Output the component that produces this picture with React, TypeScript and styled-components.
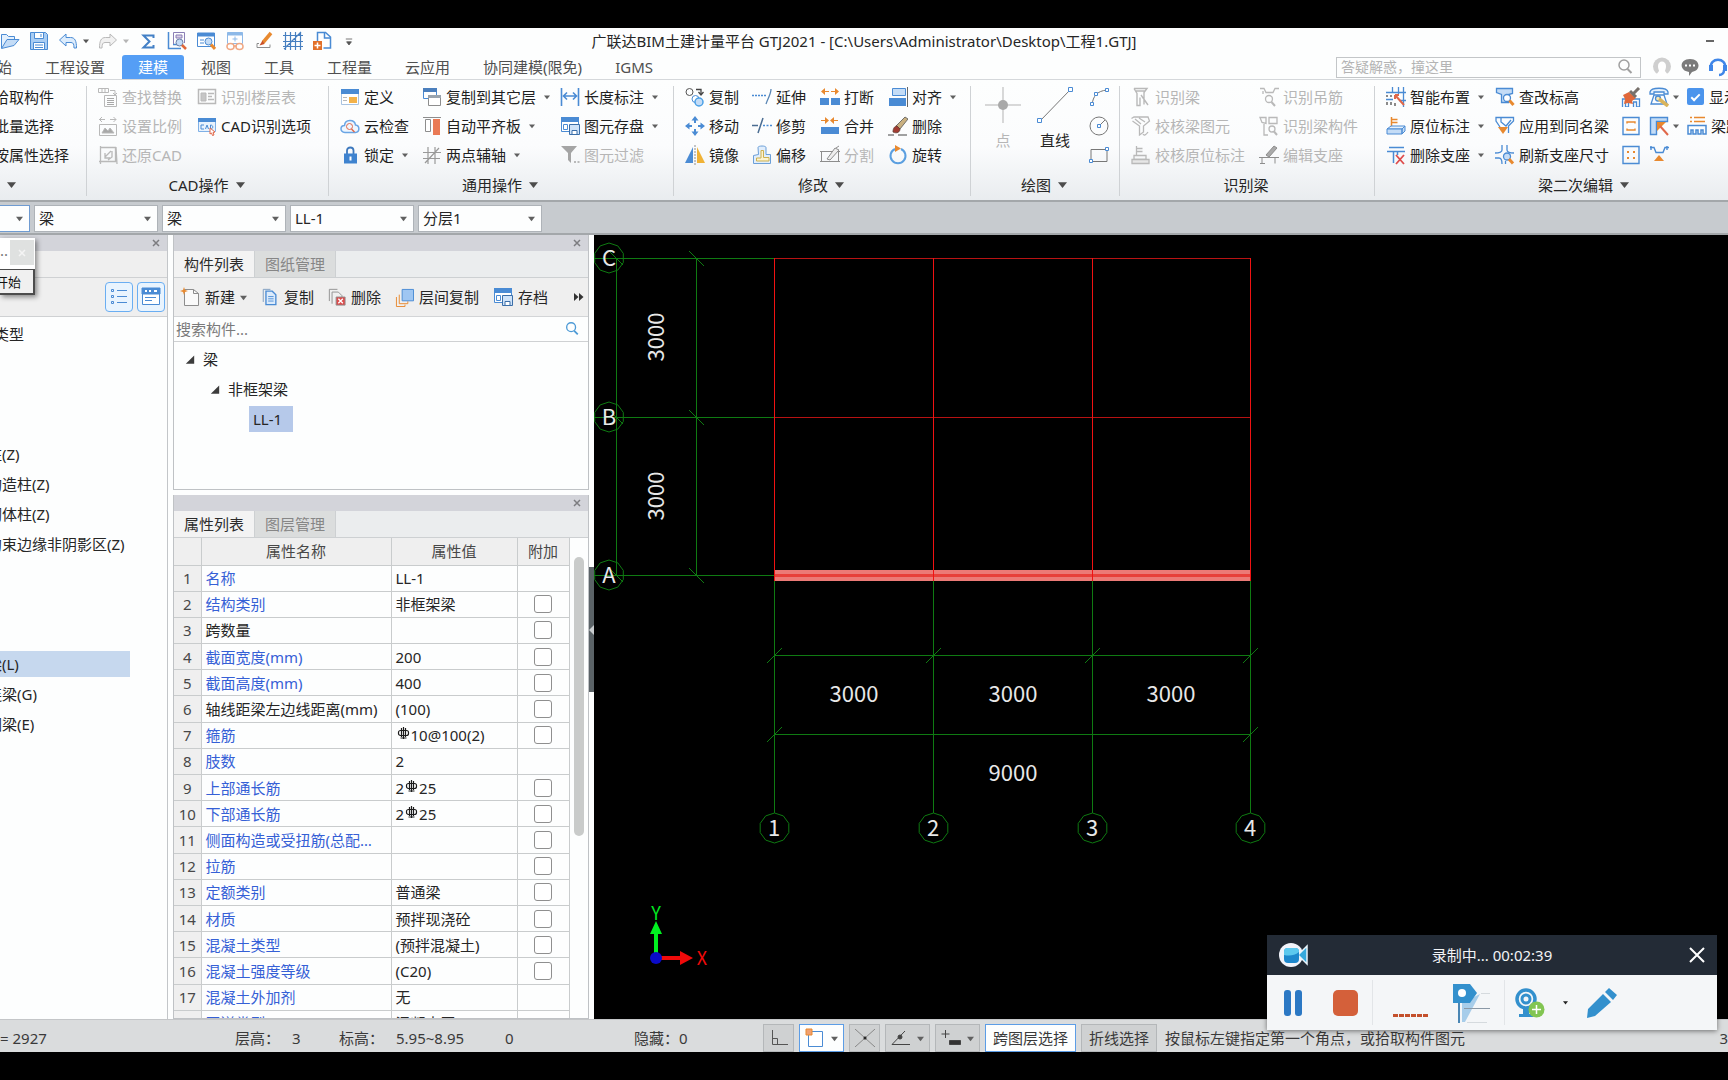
import React, { ReactNode } from "react";
import styled, { createGlobalStyle, css } from "styled-components";

const GlobalStyle = createGlobalStyle`
  *, *::before, *::after { box-sizing: border-box; }
  html, body, #root { height: 100%; }
  body {
    margin: 0;
    background: #000;
    color: #262626;
    font: 15px/20px "Noto Sans", "Noto Sans CJK SC", sans-serif;
    overflow: hidden;
  }
  button, input, select { font: inherit; color: inherit; }
  button { border: 0; background: none; padding: 0; white-space: nowrap; }
  svg { display: block; flex: none; }
`;

/* ---------- palette ---------- */
const BLUE = "#4a8bd4";
const PALE = "#c4dcf6";
const ORANGE = "#e8892f";
const RED = "#dd4b4b";
const GREY = "#8d8d8d";
const DIM = "#b9b9b9";

/* ---------- icons ---------- */
const icons: Record<string, ReactNode> = {
  open: (
    <g stroke={BLUE} fill="#e3f0fd">
      <path d="M1.500 17V3.500h5l2 2h6v3" />
      <path d="M1.500 17.500 7 8.500h12l-5 6z" fill={PALE} />
    </g>
  ),
  save: (
    <g stroke={BLUE}>
      <path d="M1.500 1.500h15l2 2v15h-17z" fill="#a9cdf3" />
      <path d="M5.500 1.500h9v6h-9zM4.500 11.500h11v7h-11z" fill="#fff" />
      <path d="M6 14h8M6 16.500h8M12 3v3" />
    </g>
  ),
  undo: <path d="M8 3 1.500 9 8 15v-3.500h5c2.500 0 3 2 3 5.500h2.500c0-7-1.500-10.500-6-10.500H8z" fill="#dcecfc" stroke={BLUE} />,
  redo: <path d="M12 3l6.500 6-6.500 6v-3.500H7c-2.500 0-3 2-3 5.500H1.500c0-7 1.500-10.500 6-10.500H12z" fill="#f1f1f1" stroke={DIM} />,
  sigma: <path d="M15.500 7V4.500H5.500l6 6-6 6h10V14" fill="none" stroke="#4380c6" strokeWidth="2" />,
  report: (
    <g fill="none" stroke={BLUE}>
      <path d="M1.500 1v16.500H14M6 13.500h6" strokeWidth="1.500" />
      <path d="M6.500 13V1.500h11V12" stroke="#8a7fb5" />
      <path d="M9 4h6v3H9z" fill="#d9cfe6" stroke="#8a7fb5" />
      <circle cx="12.500" cy="11.500" r="3.500" fill={PALE} stroke="#6b7fa8" />
      <path d="m15 14 4 4" stroke="#e0683a" strokeWidth="2.500" />
    </g>
  ),
  find: (
    <g fill="none" stroke={BLUE}>
      <path d="M1.500 2.500h17v13h-17z" fill="#fff" />
      <path d="M1.500 2h17v3h-17z" fill={BLUE} />
      <path d="M4 9h4M4 12h4" />
      <circle cx="12.500" cy="10.500" r="3.500" fill={PALE} />
      <path d="m15 13.500 4 4.500" stroke={ORANGE} strokeWidth="3" />
    </g>
  ),
  glasses: (
    <g fill="none" stroke="#8db9e8">
      <path d="M2.500 1.500h15v11h-15z" fill="#fff" />
      <path d="M2.500 2h15v2h-15z" fill="#8db9e8" />
      <path d="M10 5.500v5M7.500 8h5" />
      <g stroke="#f0a884" strokeWidth="1.600">
        <ellipse cx="5.500" cy="15.500" rx="3.500" ry="3" fill="#fff" />
        <ellipse cx="14.500" cy="15.500" rx="3.500" ry="3" fill="#fff" />
        <path d="M8.500 15h3" />
      </g>
    </g>
  ),
  brush: (
    <g fill="none">
      <path d="M17 2 9 11.500" stroke={ORANGE} strokeWidth="3.500" />
      <path d="m8.500 9.500-3 5 5-1.500z" fill="#c94f27" />
      <path d="M5 12.500H3v4h13v-3" stroke={GREY} />
    </g>
  ),
  net: <path d="M2.500 1v18M7.500 1v18M12.500 1v18M17.500 1v18M0 4.500h20M0 10.500h20M0 15.500h20M1 18 18 1" fill="none" stroke="#467fc0" strokeWidth="1.200" />,
  addDoc: (
    <g>
      <path d="M5.500 10V1.500h8l5 4.500v11h-7" fill="#fff" stroke={BLUE} strokeWidth="1.500" />
      <path d="M12.500 2v5h5.500" fill="none" stroke={BLUE} strokeWidth="1.500" />
      <path d="M1 10h9v9H1z" fill="#e2702a" />
      <path d="M5.500 11.500v6M2.500 14.500h6" stroke="#fff" strokeWidth="1.500" />
    </g>
  ),
  more: (
    <g stroke="#555" fill="#555">
      <path d="M6 7.500h8" />
      <path d="M7 11h6l-3 4z" />
    </g>
  ),
  replace: (
    <g fill="none" stroke={DIM}>
      <path d="M.5 1.500h10v4H.5zM4 1.500v4M7 1.500v4M12 3.500h5v4M15 6l2 2 2-2" />
      <path d="M6.500 8.500h12v11h-12z" />
      <path d="M9 11.500h7M9 13.500h7M9 15.500h7M9 17.500h7" stroke="#a8a8a8" />
    </g>
  ),
  scale: (
    <g fill="none" stroke={DIM}>
      <path d="M1 3.500h6M4 1 1.500 3.500 4 6M12 3.500h6M15.500 1 18 3.500 15.500 6" />
      <path d="M1.500 8.500h17v11h-17z" />
      <path d="m4 17 3-5 3 3 2-3 4 5z" fill="#a8a8a8" />
    </g>
  ),
  restore: <path d="M2.500 1v18M2.500 2.500h15v14H1M14 6v6l-4 3M13 6 7 12m0-4v5h5M18 2l1 17" fill="none" stroke={DIM} strokeWidth="1.300" />,
  floors: (
    <g fill="none" stroke={DIM}>
      <path d="M1.500 2.500h17v14h-17z" strokeWidth="1.500" />
      <path d="M4 6h5v8H4z" fill="#c6c6c6" />
      <path d="M11 6.500h6M11 9.500h4M11 12.500h6" strokeWidth="1.500" />
    </g>
  ),
  cad: (
    <g>
      <path d="M1.500 2.500h17v13h-17z" fill="#e8f2fd" stroke="#7fb0e6" />
      <path d="M1 2h18v4H1z" fill={BLUE} />
      <path d="M7 9H4v4h3M8.500 13l1.500-4 1.500 4M13.500 9v4c3 0 3-4 0-4" fill="none" stroke={BLUE} />
      <path d="m13 12 5 4-2 .5 1 2.500-1.500.5-1-2.500-1.500 1z" fill="#fff" stroke="#e0684a" />
    </g>
  ),
  define: (
    <g>
      <path d="M1.500 2.500h17v15h-17z" fill="#fff" stroke="#a9c3e0" />
      <path d="M1 2h18v5H1z" fill={BLUE} />
      <path d="M9 10h8v6H9z" fill="#f3b24a" />
      <path d="M3 10.500h4M3 13.500h4" stroke={DIM} />
    </g>
  ),
  cloud: (
    <g fill="none" stroke="#6aa5e4">
      <path d="M5 16.500C-.5 16 0 9.500 4.500 9.500 5 3 14.500 3 15.500 9c4.500.5 4.500 7 0 7.500z" fill="#eef6ff" strokeWidth="1.500" />
      <circle cx="9.500" cy="10.500" r="3" stroke="#e0684a" />
      <path d="m11.500 13 3 3" stroke="#e0684a" strokeWidth="1.500" />
    </g>
  ),
  lock: (
    <g>
      <path d="M7 9V5.500c0-4 6.500-4 6.500 0V9" fill="none" stroke="#3d78bd" strokeWidth="1.800" />
      <path d="M4 8.500h13v10H4z" fill="#3f83cf" />
      <path d="M10.500 11.500v4" stroke="#fff" strokeWidth="2" />
    </g>
  ),
  copyFloor: (
    <g>
      <path d="M1.500 1.500h13v10h-13z" fill="#fff" stroke={BLUE} />
      <path d="M1 1h14v4H1z" fill="#4b7fbd" />
      <path d="M6.500 8.500h12v10h-12z" fill="#fff" stroke={GREY} />
      <path d="M6 8h13v3H6z" fill="#9aa4ae" />
    </g>
  ),
  align2: (
    <g>
      <path d="M1 1.500h18" stroke={GREY} />
      <path d="M3.500 3.500h5v12h-5z" fill="#fff" stroke={GREY} />
      <path d="M11 3h7v16h-7z" fill="#ea7a55" />
    </g>
  ),
  axis: <path d="M6 2v17M13 2v17M1 7.500h18M1 13.500h17M3 18 17 3" fill="none" stroke="#999" strokeWidth="1.200" />,
  measure: <path d="M1.500 1v18M18.500 1v18M3 9h14M7 5.500 3.500 9 7 12.500M13 5.500 16.500 9 13 12.500" fill="none" stroke={BLUE} strokeWidth="1.600" />,
  storage: (
    <g>
      <path d="M1.500 1.500h17v14h-17z" fill="#fff" stroke={BLUE} />
      <path d="M1 1h18v5H1z" fill={BLUE} />
      <path d="M3.500 8.500h4v5h-4z" fill="none" stroke={BLUE} />
      <path d="M9.500 8.500h10v10h-10z" fill="#cfe3f9" stroke="#3b6ea8" />
      <path d="M12 14.500h5v4h-5z" fill="#fff" stroke="#3b6ea8" />
    </g>
  ),
  filter: (
    <g>
      <path d="M1 1h16l-6 7v10l-3-3V8z" fill="#a5a5a5" />
      <path d="M14 17h2M17.500 17h2" stroke="#a5a5a5" strokeWidth="1.500" />
    </g>
  ),
  copy3: (
    <g fill="none">
      <circle cx="4.500" cy="5" r="3.500" stroke="#555" />
      <path d="M11 2.500h5v4M13.500 5l2.500 3 2.500-3" stroke="#444" strokeWidth="1.300" />
      <circle cx="10.500" cy="12" r="3.500" fill="#fff" stroke={BLUE} />
      <circle cx="14" cy="15" r="4" fill={PALE} stroke="#4aa0e6" strokeWidth="1.500" />
    </g>
  ),
  move: (
    <g fill={BLUE}>
      <path d="M10 0l3.500 4.500h-7zM10 20l3.500-4.500h-7zM0 10l4.500-3.500v7zM20 10l-4.500-3.500v7z" />
      <path d="M9 4h2v3H9zM9 13h2v3H9zM4 9h3v2H4zM13 9h3v2h-3z" />
    </g>
  ),
  mirror: (
    <g>
      <path d="M8 2v16H0z" fill={BLUE} />
      <path d="M10 0v20" stroke={GREY} strokeDasharray="2 1" />
      <path d="M12 2v16h8z" fill="#f0b236" />
    </g>
  ),
  extend: (
    <g fill="none" stroke={BLUE} strokeWidth="1.300">
      <path d="M0 8.500h14" strokeDasharray="2 1" />
      <path d="M19 2c0 5-3 9-5 15" stroke="#5a86b4" />
    </g>
  ),
  trim: (
    <g fill="none" stroke={BLUE} strokeWidth="1.500">
      <path d="M0 9.500h6M11 2 6 17" stroke="#4b6d92" />
      <path d="M11 9.500h9" strokeDasharray="2 1.500" />
    </g>
  ),
  offset: (
    <g>
      <path d="M6 2.500c0-2 8-2 8 0v7h4.500v9H1.500v-8l5-1z" fill="#e1eefc" stroke="#6b9fd8" />
      <path d="M9 5.500h2.500v7H17v3.500H4.500v-3H9z" fill="#fdf3cf" stroke="#cdb04f" />
    </g>
  ),
  breakIt: (
    <g>
      <path d="M0 11h9v7H0zM11 11h9v7h-9z" fill={BLUE} />
      <path d="M1 4.500l4-3.500v7zM5 4h4v1H5zM19 4.500l-4-3.500v7zM11 4h4v1h-4z" fill={ORANGE} />
    </g>
  ),
  merge: (
    <g>
      <path d="M1 11h18v7H1z" fill={BLUE} />
      <path d="M9 4.500 5 1v7zM1 4h4v1H1zM10 4.500l4-3.500v7zM14 4h4v1h-4z" fill={ORANGE} />
    </g>
  ),
  split: (
    <g fill="none" stroke={GREY}>
      <path d="M1.500 6.500h17v10h-17zM0 6.500h20M0 16.500h20" />
      <path d="m7 14 8-11 4 2-9 10z" fill="#eee" />
      <path d="m16 3 3-2" />
    </g>
  ),
  alignTop: (
    <g>
      <path d="M4.500 1.500h13v7h-13z" fill={PALE} stroke={BLUE} />
      <path d="M1 11h17v8H1z" fill={BLUE} />
      <path d="M19.500 0v20" stroke="#666" />
    </g>
  ),
  erase: (
    <g>
      <path d="m8 10 9-9 3 2-8 10z" fill="#c9b080" stroke="#555" strokeWidth=".8" />
      <path d="M5 16c0-4 2-6 4-6l3 3c0 3-3 5-7 3" fill="#a23c32" stroke="#5f3a30" strokeWidth=".8" />
      <path d="M0 19h6M10 19h9" stroke="#444" />
    </g>
  ),
  rotate: (
    <g fill="none">
      <path d="M13 4a7.500 7.500 0 1 1-6 0" stroke="#5b9fe0" strokeWidth="2" />
      <path d="m7 0 6 3.500L7 7z" fill={ORANGE} />
    </g>
  ),
  arc: (
    <g fill="none" stroke="#777">
      <path d="M3 18C4 9 8 4 18 3" />
      <g fill="#fff" stroke={BLUE}>
        <path d="M1.500 15.500h3v3h-3zM5.500 5.500h3v3h-3zM16.500 1.500h3v3h-3z" />
      </g>
    </g>
  ),
  circle: (
    <g fill="none" stroke="#777">
      <circle cx="10" cy="10" r="9" />
      <path d="M11 9l5-5" />
      <path d="M8.500 8.500h3v3h-3z" stroke={BLUE} />
    </g>
  ),
  rect: (
    <g fill="none" stroke="#777">
      <path d="M2 4.500h16v12H2z" />
      <g fill="#fff" stroke={BLUE}>
        <path d="M.5 14.500h3v3h-3zM16.500 2.500h3v3h-3z" />
      </g>
    </g>
  ),
  idBeam: <path d="M3 1.500h13l-3 4v12M3 1.500l3 5v12h3v-8M10 8l7 10M5 4h9" fill="none" stroke={DIM} strokeWidth="1.400" />,
  chkBeam: <path d="M.5 2.500 3 1h14l1.500 4-6 5v6l-4 3V10l-7-5M4 3l6 5M8 2l6 4M12 18c1 2 3 1 5-2" fill="none" stroke={DIM} strokeWidth="1.300" />,
  stampGrey: (
    <g fill="none" stroke={DIM} strokeWidth="1.300">
      <path d="M5.500 10V1M5.500 3.500h6M5.500 6.500h6M3 10.500h12v4H3z" />
      <path d="M1 14.500h17v4H1z" fill="#e6e6e6" />
    </g>
  ),
  hanger: (
    <g fill="none" stroke={DIM} strokeWidth="1.300">
      <path d="M1 1.500h4l2 4h7l2-4h4M4 4v3" />
      <circle cx="10" cy="12" r="3.500" />
      <path d="m12.500 15 3.500 4" strokeWidth="2" />
    </g>
  ),
  idPart: (
    <g fill="none" stroke={DIM} strokeWidth="1.300">
      <path d="M1 1.500h6v6l-4-1zM10 1.500h8v6h-8zM5 8v11h4" />
      <circle cx="13" cy="13" r="3" />
      <path d="m15 15.500 3 3.500" strokeWidth="2" />
    </g>
  ),
  editSeat: (
    <g fill="none" stroke={GREY}>
      <path d="m7 10 8-9 3 2-8 9z" fill="#aaa" />
      <path d="M0 12.500h20M3 12.500v6M16 12.500v6M1 18.500h5" />
    </g>
  ),
  smart: (
    <g fill="none" stroke={BLUE} strokeWidth="1.300">
      <path d="M6.500 0v6M12.500 0v7M17.500 0v20M0 5.500h20M0 12.500h7M13 13.500h7" />
      <path d="M1 8v2M5 8v2M1 15v3M5 15v3M9 16v3" stroke="#6e6e6e" strokeWidth="1.600" />
      <path d="m9 8 9 10M9 8v4M9 8h4" stroke="#e0684a" strokeWidth="2" />
    </g>
  ),
  stamp: (
    <g fill="none">
      <path d="M5.500 11V1M5.500 3.500h6M5.500 6.500h6" stroke={ORANGE} strokeWidth="1.500" />
      <path d="m1 13 4-3h14l-3 3z" fill="#e5f1fd" stroke={BLUE} />
      <path d="M1 13h15v5H1zM16 13l3-3v5l-3 3z" fill={PALE} stroke={BLUE} />
    </g>
  ),
  delSeat: (
    <g fill="none" stroke={BLUE} strokeWidth="1.500">
      <path d="M3 2.500h15M1 6.500h18M7.500 6.500V18M11.500 6.500V10" />
      <path d="m10 10 8 9M18 10l-8 9" stroke={RED} strokeWidth="1.800" />
    </g>
  ),
  elev: (
    <g fill="none" stroke={BLUE} strokeWidth="1.300">
      <path d="M1.500 1.500h16v5l-4 1v8h-7v-8l-5-2z" fill={PALE} />
      <circle cx="12" cy="11" r="3.500" fill="#fff" />
      <path d="m14.500 13.500 4 4.500" stroke={ORANGE} strokeWidth="3" />
    </g>
  ),
  same: (
    <g fill="none" stroke={BLUE} strokeWidth="1.300">
      <path d="M5 11 1 5V1.500h17.500V5l-5 5v7M6 2v4l5 4 5-6" />
      <path d="M3 11h10l-5 7z" fill={ORANGE} stroke="none" />
    </g>
  ),
  refresh: (
    <g fill="none" stroke={BLUE} strokeWidth="1.300">
      <path d="M7 0v5c0 2-3 3-7 3M12 0v5c0 2 3 3 7 3M0 13h4c2 0 3 2 3 6" />
      <circle cx="12" cy="11.500" r="3.500" fill={PALE} />
      <path d="m14 14 4 4.500" stroke={ORANGE} strokeWidth="3" />
      <path d="M10.500 16v3" />
    </g>
  ),
  brushBeam: (
    <g fill="none">
      <path d="M1.500 20v-8h17v8h-3v-5h-3v5M7.500 20v-5h-3v5z" stroke={BLUE} strokeWidth="1.300" />
      <path d="m2 8 6-3 7 6-4 3 1 3-5-1-4 1 1-5z" fill="#e0683a" />
      <path d="m9 4 6 6M12 7l6-6" stroke="#77706b" strokeWidth="3" />
    </g>
  ),
  phone: (
    <g fill="none" stroke={BLUE} strokeWidth="1.300">
      <path d="M1 5c1-5 17-5 18 0v2h-4V5H5v2H1z" fill="#e5f1fd" />
      <path d="M5 8h10l3 9H2z" />
      <circle cx="9" cy="11.500" r="2.500" fill="#f5e7b8" />
      <path d="m10 12 9 7" stroke="#d9b45c" strokeWidth="3.500" />
    </g>
  ),
  listBox: (
    <g fill="none" stroke={BLUE} strokeWidth="1.400">
      <path d="M2 1.500h16v17H2z" />
      <path d="M6 7.500V6h8v1.500M6 12.500V14h8v-1.500" stroke={ORANGE} />
    </g>
  ),
  corner: (
    <g fill="none" stroke={BLUE} strokeWidth="1.400">
      <path d="M1.500 18.500v-17h17v4h-11v13z" fill={PALE} />
      <path d="M8 6h9l-9 9z" fill={ORANGE} stroke="none" />
      <path d="m11 10 8 9" stroke="#e0684a" strokeWidth="2" />
    </g>
  ),
  dotsBox: (
    <g fill="none" stroke={BLUE} strokeWidth="1.400">
      <path d="M2 1.500h16v17H2z" />
      <path d="M6 6h2v2H6zM12 6h2v2h-2zM6 12h2v2H6zM12 12h2v2h-2z" fill={ORANGE} stroke="none" />
    </g>
  ),
  hangerBlue: (
    <g fill="none" stroke={BLUE} strokeWidth="1.400">
      <path d="M1 2.500h4l2 5h7l2-5h4M2 1v4M18 1v4" />
      <path d="m10 10 5 6H5z" fill={ORANGE} stroke="none" />
    </g>
  ),
  beamList: (
    <g fill="none" strokeWidth="1.500">
      <path d="M3 1.500h2M7 1.500h11M3 5.500h2M7 5.500h11" stroke={ORANGE} />
      <path d="M1 18V9.500h18V18h-3v-4h-2v4h-3v-4H9v4H6v-4H4v4z" stroke={BLUE} />
    </g>
  ),
  newDoc: (
    <g fill="none">
      <path d="M4.500 2.500h9l5 4v12h-14z" fill="#fafafa" stroke={GREY} />
      <path d="M13.500 2.500v4h5" stroke={GREY} />
      <path d="m4 0 1 3 3 1-3 1-1 3-1-3-3-1 3-1z" fill={ORANGE} />
    </g>
  ),
  copyDoc: (
    <g fill="none" stroke={BLUE}>
      <path d="M2.500 15.500v-14h8" stroke="#7899bd" />
      <path d="M5.500 3.500h7l4 4v11h-11z" fill="#dcebfb" strokeWidth="1.500" />
      <path d="M8 9.500h6M8 12h6M8 14.500h6" />
    </g>
  ),
  delDoc: (
    <g fill="none" stroke={GREY}>
      <path d="M1.500 14.500v-13h9M4.500 17.500v-13h7l4 4v2" />
      <path d="M9 10h10v9H9z" fill={RED} />
      <path d="m11.500 12 5 5M16.500 12l-5 5" stroke="#fff" strokeWidth="1.500" />
    </g>
  ),
  layers: (
    <g fill="none" stroke={ORANGE}>
      <path d="M1.500 9.500v10h9v-2M4.500 7v9.500h9V14" />
      <path d="M7.500 1.500h12v12h-12z" fill="#9fc6f2" stroke={BLUE} />
    </g>
  ),
  caretR: <path d="M3 18 17 4v14z" fill="#3c3c3c" />,
};

const Icon = ({ n, s = 20 }: { n: string; s?: number }) => (
  <svg width={s} height={s} viewBox="0 0 20 20" aria-hidden="true">
    {icons[n]}
  </svg>
);

const Caret = ({ w = 7, c = "#606060" }: { w?: number; c?: string }) => (
  <svg width={w} height={w} viewBox="0 0 8 8" aria-hidden="true">
    <path d="M0 2h8L4 7z" fill={c} />
  </svg>
);

const Magnifier = ({ c, s = 18 }: { c: string; s?: number }) => (
  <svg width={s} height={s} viewBox="0 0 18 18" fill="none" stroke={c} strokeWidth="1.500" aria-hidden="true">
    <circle cx="8" cy="7" r="5" />
    <path d="m11.500 11 4 4" strokeWidth="2" />
  </svg>
);

/* ---------- window frame ---------- */
const Screen = styled.div`
  display: flex;
  flex-direction: column;
  height: 100vh;
  padding: 28px 0;
  background: #000;
  overflow: hidden;
`;

const TitleBar = styled.header`
  display: grid;
  grid-template-columns: 1fr auto 1fr;
  align-items: center;
  height: 27px;
  flex: none;
  padding-bottom: 2px;
  background: #fdfefe;
`;

const QuickTools = styled.div`
  display: flex;
  align-items: center;
  gap: 9px;
`;

const QuickButton = styled.button`
  display: flex;
  align-items: center;
  gap: 5px;
`;

const AppTitle = styled.h1`
  margin: 0;
  font-size: 15px;
  font-weight: 400;
  line-height: 20px;
`;

const Minimise = styled.button`
  justify-self: end;
  width: 8px;
  height: 2px;
  margin-right: 14px;
  background: #666;
`;

const TabRow = styled.div`
  display: flex;
  justify-content: space-between;
  height: 25px;
  flex: none;
  background: #fdfefe;
  border-bottom: 1px solid #d5d8db;
`;

const Tabs = styled.nav`
  display: flex;
  gap: 1px;
  margin-left: -34px;
`;

const Tab = styled.button<{ $active?: boolean }>`
  height: 24px;
  padding: 0 16px;
  border-radius: 3px 3px 0 0;
  color: ${(p) => (p.$active ? "#fff" : "#505050")};
  background: ${(p) => (p.$active ? "#559ef5" : "transparent")};
`;

const TabTools = styled.div`
  display: flex;
  align-items: center;
  gap: 8px;
  width: 392px;
`;

const HelpSearch = styled.label`
  display: flex;
  align-items: center;
  width: 306px;
  height: 21px;
  padding: 0 6px 0 4px;
  margin-right: 3px;
  border: 1px solid #c3c6c8;
`;

const SearchInput = styled.input`
  flex: 1;
  min-width: 0;
  padding: 0;
  border: 0;
  outline: 0;
  background: none;
  font-size: 14px;
  line-height: 18px;
  &::placeholder { color: #b4b4b4; opacity: 1; }
`;

const RoundButton = styled.button`
  display: block;
  width: 20px;
  height: 20px;
`;

/* ---------- ribbon ---------- */
const Ribbon = styled.section`
  display: flex;
  height: 122px;
  flex: none;
  background: linear-gradient(#fdfefe 0%, #fbfcfd 55%, #e9ecef 100%);
  border-bottom: 2px solid #a3a7aa;
`;

const Group = styled.div<{ $w: number; $clip?: boolean }>`
  display: flex;
  flex-direction: column;
  flex: none;
  width: ${(p) => p.$w}px;
  ${(p) => p.$clip && css`margin-left: -98px;`}
  padding-top: 2px;
  &:not(:last-child) {
    background: linear-gradient(#cfd2d5, #cfd2d5) right 6px / 1px 110px no-repeat;
  }
`;

const Columns = styled.div<{ $cols: string }>`
  display: grid;
  grid-template-columns: ${(p) => p.$cols};
  grid-template-rows: repeat(3, 29px);
  grid-auto-flow: column;
  align-items: center;
  padding-left: 11px;
`;

const Cmd = styled.button`
  display: flex;
  align-items: center;
  gap: 4px;
  height: 28px;
  color: #1f1f1f;
  &:disabled { color: #b6b6b6; }
`;

const CmdText = styled.span`
  margin-right: 4px;
`;

const GroupTitle = styled.button`
  display: flex;
  align-items: center;
  justify-content: center;
  gap: 7px;
  height: 31px;
  padding-right: 3px;
`;

const DrawBody = styled.div`
  display: grid;
  grid-template-columns: 52px 52px 36px;
  height: 87px;
  padding-left: 6px;
`;

const BigCmd = styled.button`
  display: flex;
  flex-direction: column;
  align-items: center;
  gap: 5px;
  padding-top: 3px;
  &:disabled { color: #b6b6b6; }
`;

const ShapeStack = styled.div`
  display: grid;
  grid-template-rows: repeat(3, 29px);
  justify-items: center;
  align-items: center;
`;

const ShowOption = styled.label`
  display: flex;
  align-items: center;
  gap: 5px;
  white-space: nowrap;
`;

const BlueCheck = styled.input`
  appearance: none;
  width: 17px;
  height: 17px;
  margin: 0;
  flex: none;
  border-radius: 2px;
  background: #4b94ec;
  display: grid;
  place-items: center;
  &::after {
    content: "";
    width: 9px;
    height: 5px;
    border: solid #fff;
    border-width: 0 0 2px 2px;
    transform: rotate(-45deg);
  }
`;

type CmdSpec = [icon: string, text: string, flags?: string];

const Command = ({ spec: [icon, text, flags = ""] }: { spec: CmdSpec }) => (
  <Cmd disabled={flags.includes("x")} aria-label={text || icon}>
    {icon && <Icon n={icon} />}
    {text && <CmdText>{text}</CmdText>}
    {flags.includes("v") && <Caret w={6} />}
  </Cmd>
);

const selectCmds: CmdSpec[] = [["", "拾取构件"], ["", "批量选择"], ["", "按属性选择"]];
const cadCmds: CmdSpec[] = [
  ["replace", "查找替换", "x"], ["scale", "设置比例", "x"], ["restore", "还原CAD", "x"],
  ["floors", "识别楼层表", "x"], ["cad", "CAD识别选项"],
];
const commonCmds: CmdSpec[] = [
  ["define", "定义"], ["cloud", "云检查"], ["lock", "锁定", "v"],
  ["copyFloor", "复制到其它层", "v"], ["align2", "自动平齐板", "v"], ["axis", "两点辅轴", "v"],
  ["measure", "长度标注", "v"], ["storage", "图元存盘", "v"], ["filter", "图元过滤", "x"],
];
const modifyCmds: CmdSpec[] = [
  ["copy3", "复制"], ["move", "移动"], ["mirror", "镜像"],
  ["extend", "延伸"], ["trim", "修剪"], ["offset", "偏移"],
  ["breakIt", "打断"], ["merge", "合并"], ["split", "分割", "x"],
  ["alignTop", "对齐", "v"], ["erase", "删除"], ["rotate", "旋转"],
];
const identifyCmds: CmdSpec[] = [
  ["idBeam", "识别梁", "x"], ["chkBeam", "校核梁图元", "x"], ["stampGrey", "校核原位标注", "x"],
  ["hanger", "识别吊筋", "x"], ["idPart", "识别梁构件", "x"], ["editSeat", "编辑支座", "x"],
];
const editCmds: CmdSpec[] = [
  ["smart", "智能布置", "v"], ["stamp", "原位标注", "v"], ["delSeat", "删除支座", "v"],
  ["elev", "查改标高"], ["same", "应用到同名梁"], ["refresh", "刷新支座尺寸"],
  ["brushBeam", ""], ["listBox", ""], ["dotsBox", ""],
  ["phone", "", "v"], ["corner", "", "v"], ["hangerBlue", ""],
];

const Cmds = ({ list }: { list: CmdSpec[] }) => (
  <>{list.map((c) => <Command key={c[0] + c[1]} spec={c} />)}</>
);

const Title = ({ children, plain }: { children: ReactNode; plain?: boolean }) => (
  <GroupTitle>
    {children}
    {!plain && <Caret w={9} c="#4c4c4c" />}
  </GroupTitle>
);

/* ---------- combo bar ---------- */
const ComboBar = styled.div`
  display: flex;
  gap: 4px;
  height: 33px;
  flex: none;
  padding: 3px 0 0;
  margin-left: -94px;
  background: #c7cbcf;
  border-bottom: 2px solid #a3a7aa;
`;

const ComboBox = styled.div`
  position: relative;
  width: 124px;
  height: 27px;
`;

const Combo = styled.select<{ $focus?: boolean }>`
  appearance: none;
  width: 100%;
  height: 100%;
  padding: 0 20px 2px 4px;
  border: 1px solid ${(p) => (p.$focus ? "#6f9bd1" : "#aeb3b8")};
  border-radius: 0;
  background: #fdfefe;
`;

const ComboArrow = styled.span`
  position: absolute;
  right: 7px;
  top: 10px;
  pointer-events: none;
`;

/* ---------- docks ---------- */
const Work = styled.main`
  display: flex;
  flex: 1;
  min-height: 0;
  background: #fdfefe;
`;

const LeftDock = styled.aside`
  display: flex;
  flex-direction: column;
  width: 168px;
  flex: none;
  overflow: hidden;
  border-right: 1px solid #c3c6c9;
`;

const DockBar = styled.div`
  display: flex;
  justify-content: flex-end;
  align-items: center;
  height: 16px;
  flex: none;
  padding-right: 7px;
  background: #d3d4da;
`;

const CloseButton = styled.button`
  display: grid;
  place-items: center;
  width: 8px;
  height: 8px;
`;

const DockStrip = styled.div<{ $h: number }>`
  display: flex;
  align-items: center;
  justify-content: flex-end;
  gap: 4px;
  height: ${(p) => p.$h}px;
  flex: none;
  padding-right: 2px;
  background: #efefef;
  border-bottom: 1px solid #cfd1d3;
`;

const ViewToggle = styled.button`
  display: grid;
  place-items: center;
  width: 28px;
  height: 30px;
  border: 1px solid #6aaef2;
  border-radius: 4px;
  background: #e9f4fe;
`;

const TypeList = styled.ul`
  list-style: none;
  margin: 2px 0 0 -36px;
  padding: 0;
`;

const TypeItem = styled.li<{ $deep?: boolean; $on?: boolean }>`
  display: flex;
  align-items: center;
  width: 166px;
  height: 30px;
  padding-left: ${(p) => (p.$deep ? 23 : 0)}px;
  white-space: nowrap;
  ${(p) => p.$on && css`height: 26px; margin: 2px 0; background: #c6d8ee;`}
`;

const MidDock = styled.aside`
  display: flex;
  flex-direction: column;
  gap: 5px;
  width: 421px;
  flex: none;
  padding-left: 5px;
`;

const Panel = styled.section<{ $h?: number }>`
  display: flex;
  flex-direction: column;
  ${(p) => (p.$h ? css`height: ${p.$h}px; flex: none;` : css`flex: 1; min-height: 0;`)}
  border: 1px solid #bfc2c5;
  border-top: 0;
  overflow: hidden;
`;

const PanelTabs = styled.div`
  display: flex;
  height: 27px;
  flex: none;
  background: #ebedee;
  border-bottom: 1px solid #cdd0d2;
`;

const PanelTab = styled.button<{ $active?: boolean }>`
  width: 81px;
  height: 26px;
  color: ${(p) => (p.$active ? "#2b2b2b" : "#868686")};
  background: ${(p) => (p.$active ? "#f3f3f3" : "#dbdddd")};
  border-right: 1px solid #cdd0d2;
`;

const PanelTools = styled.div`
  display: flex;
  align-items: center;
  gap: 14px;
  height: 39px;
  flex: none;
  padding: 0 4px 0 6px;
  background: #efefef;
  border-bottom: 1px solid #d3d5d7;
`;

const ToolButton = styled.button`
  display: flex;
  align-items: center;
  gap: 5px;
`;

const ToolEnd = styled(ToolButton)`
  margin-left: auto;
`;

const PartSearch = styled.label`
  display: flex;
  align-items: center;
  height: 25px;
  flex: none;
  padding: 0 8px 0 2px;
  border-bottom: 1px solid #cfd1d3;
`;

const PartInput = styled(SearchInput)`
  font-size: 15px;
  &::placeholder { color: #7a7a7a; opacity: 1; }
`;

const Tree = styled.ul`
  list-style: none;
  margin: 0;
  padding: 2px 0 0;
`;

const TreeRow = styled.li<{ $level: number }>`
  display: flex;
  align-items: center;
  gap: 7px;
  height: 30px;
  padding-left: ${(p) => 10 + p.$level * 25}px;
`;

const TreeLeaf = styled.button`
  height: 26px;
  width: 44px;
  margin-left: 15px;
  padding-left: 4px;
  text-align: left;
  background: #b6c9ea;
`;

const TableArea = styled.div`
  display: flex;
  flex: 1;
  min-height: 0;
  overflow: hidden;
`;

const PropTable = styled.table`
  width: 395px;
  height: 499px;
  flex: none;
  table-layout: fixed;
  border-collapse: collapse;
`;

const Th = styled.th`
  height: 27px;
  padding: 0;
  font-weight: 400;
  color: #484848;
  background: #efefef;
  border: solid #c9cccd;
  border-width: 0 1px 1px 0;
`;

const Td = styled.td<{ $kind?: "num" | "box"; $link?: boolean }>`
  height: 26px;
  padding: 0 10px 0 4px;
  border: solid #c9cccd;
  border-width: 0 1px 1px 0;
  white-space: nowrap;
  overflow: hidden;
  text-overflow: ellipsis;
  color: ${(p) => (p.$link ? "#3560d6" : "#262626")};
  ${(p) => p.$kind === "num" && css`padding: 0; text-align: center; color: #484848; background: #efefef;`}
  ${(p) => p.$kind === "box" && css`padding: 0;`}
`;

const Check = styled.input`
  appearance: none;
  display: block;
  width: 18px;
  height: 18px;
  margin: 0 auto;
  border: 1px solid #8f8f8f;
  border-radius: 3px;
  background: #fff;
`;

const Value = styled.span`
  display: flex;
  align-items: center;
`;

const ScrollTrack = styled.div`
  flex: 1;
  display: flex;
  justify-content: center;
  padding-top: 19px;
`;

const ScrollThumb = styled.div`
  width: 10px;
  height: 279px;
  border-radius: 5px;
  background: #c9cbca;
`;

const Splitter = styled.div`
  display: flex;
  flex-direction: column;
  width: 5px;
  flex: none;
  padding-top: 332px;
`;

const SplitHandle = styled.button`
  display: grid;
  place-items: center;
  width: 5px;
  height: 125px;
  background: #5b6367;
`;

const View = styled.section`
  flex: 1;
  min-width: 0;
  background: #000;
  overflow: hidden;
`;

const Drawing = styled.svg`
  width: 100%;
  height: 100%;
  font: 22px "Noto Sans CJK SC", sans-serif;
`;

/* ---------- status bar ---------- */
const StatusBar = styled.footer`
  display: flex;
  align-items: stretch;
  height: 33px;
  flex: none;
  padding-top: 4px;
  background: #dadcdd;
  border-top: 1px solid #c4c6c8;
  color: #3a3a3a;
  white-space: nowrap;
  overflow: hidden;
`;

const Cell = styled.span<{ $w: number }>`
  display: flex;
  align-items: center;
  gap: 12px;
  width: ${(p) => p.$w}px;
  flex: none;
`;

const SnapTools = styled.div`
  display: flex;
  gap: 5px;
`;

const Snap = styled.button<{ $on?: boolean; $w: number }>`
  display: flex;
  align-items: center;
  justify-content: space-evenly;
  width: ${(p) => p.$w}px;
  height: 28px;
  border: 1px solid ${(p) => (p.$on ? "#5c9de6" : "#b4b7b9")};
  background: ${(p) => (p.$on ? "#fdfefe" : "#cfd1d2")};
`;

const Hint = styled.span`
  display: flex;
  flex: 1;
  align-items: center;
  justify-content: space-between;
  padding-left: 8px;
`;

/* ---------- floating windows ---------- */
const MiniWindow = styled.div`
  position: absolute;
  left: 0;
  top: 238px;
  width: 35px;
  background: #fff;
  box-shadow: 2px 2px 5px rgba(0, 0, 0, 0.45);
`;

const MiniHead = styled.div`
  display: flex;
  justify-content: flex-end;
  gap: 2px;
  height: 31px;
  padding-top: 2px;
  color: #777;
`;

const MiniClose = styled.button`
  display: grid;
  place-items: center;
  width: 25px;
  height: 25px;
  background: #dfe1e0;
  margin-right: 1px;
`;

const MiniStart = styled.button`
  display: flex;
  justify-content: flex-end;
  align-items: center;
  width: 35px;
  height: 26px;
  padding-right: 12px;
  border: solid #4c4c4c;
  border-width: 1px 2px 2px 0;
  background: #f0f0f0;
  font-size: 13px;
  color: #111;
`;

const Recorder = styled.div`
  position: absolute;
  right: 11px;
  bottom: 50px;
  width: 450px;
  background: #f4f6f8;
  box-shadow: 0 1px 5px rgba(0, 0, 0, 0.5);
`;

const RecHead = styled.div`
  display: grid;
  grid-template-columns: 1fr auto 1fr;
  align-items: center;
  height: 40px;
  padding: 0 12px;
  background: #232b36;
  color: #f2f4f6;
`;

const RecClose = styled.button`
  justify-self: end;
`;

const RecBody = styled.div`
  display: flex;
  align-items: center;
  height: 55px;
  padding-left: 13px;
`;

const RecGroup = styled.div<{ $w: number }>`
  display: flex;
  width: ${(p) => p.$w}px;
  flex: none;
  border-right: 1px solid #e2e5e8;
`;

const RecButton = styled.button<{ $w: number }>`
  display: grid;
  place-items: center;
  width: ${(p) => p.$w}px;
  height: 45px;
  flex: none;
`;

/* ---------- data ---------- */
const quick: [string, boolean?][] = [
  ["open"], ["save"], ["undo", true], ["redo", true], ["sigma"], ["report"], ["find"],
  ["glasses"], ["brush"], ["net"], ["addDoc"],
];

const menuTabs = ["开始", "工程设置", "建模", "视图", "工具", "工程量", "云应用", "协同建模(限免)", "IGMS"];

const typeRows = ["常用类型", "", "", "", "柱(Z)", "构造柱(Z)", "砌体柱(Z)", "约束边缘非阴影区(Z)", "", "", "", "梁(L)", "连梁(G)", "圈梁(E)"];

type Prop = { name: string; value?: string; link?: boolean; box?: boolean };
const props: Prop[] = [
  { name: "名称", value: "LL-1", link: true },
  { name: "结构类别", value: "非框架梁", link: true, box: true },
  { name: "跨数量", box: true },
  { name: "截面宽度(mm)", value: "200", link: true, box: true },
  { name: "截面高度(mm)", value: "400", link: true, box: true },
  { name: "轴线距梁左边线距离(mm)", value: "(100)", box: true },
  { name: "箍筋", value: "#10@100(2)", link: true, box: true },
  { name: "肢数", value: "2", link: true },
  { name: "上部通长筋", value: "2#25", link: true, box: true },
  { name: "下部通长筋", value: "2#25", link: true, box: true },
  { name: "侧面构造或受扭筋(总配筋值)", link: true, box: true },
  { name: "拉筋", link: true, box: true },
  { name: "定额类别", value: "普通梁", link: true, box: true },
  { name: "材质", value: "预拌现浇砼", link: true, box: true },
  { name: "混凝土类型", value: "(预拌混凝土)", link: true, box: true },
  { name: "混凝土强度等级", value: "(C20)", link: true, box: true },
  { name: "混凝土外加剂", value: "无", link: true },
  { name: "泵送类型", value: "混凝土泵", link: true },
];

/* Steel grade mark: an oval crossed by three bars on a foot. */
const Rebar = () => (
  <svg width="15" height="18" viewBox="0 0 15 18" fill="none" stroke="#1c1c1c" strokeWidth="1.200" aria-hidden="true">
    <rect x="2.500" y="4.500" width="10" height="5" rx="2" />
    <path d="M5.500 2v9M7.500 1v12M9.500 2v9M4.500 12h6" />
  </svg>
);

const PropValue = ({ text }: { text: string }) => {
  const parts = text.split("#");
  if (parts.length === 1) return <>{text}</>;
  return <Value>{parts[0]}<Rebar />{parts[1]}</Value>;
};

const XMark = ({ c = "#7c7c80" }: { c?: string }) => (
  <svg width="8" height="8" viewBox="0 0 8 8" stroke={c} strokeWidth="1.500" aria-hidden="true">
    <path d="m1 1 6 6M7 1 1 7" />
  </svg>
);

/* ---------- drawing view ---------- */
const XS = [180, 339, 498, 656];
const YS = [23, 182, 340];

const bubble = (cx: number, cy: number) =>
  Array.from({ length: 10 }, (_, i) => {
    const a = (i * Math.PI) / 5 + Math.PI / 2;
    return `${(cx + 15 * Math.cos(a)).toFixed(1)},${(cy + 15 * Math.sin(a)).toFixed(1)}`;
  }).join(" ");

const Plan = () => (
  <Drawing role="img" aria-label="轴网平面图">
    <g stroke="#0f7a12" fill="none">
      {YS.map((y) => <path key={y} d={`M0 ${y}.5H180M95 ${y - 7}l15 15M15 ${y - 7}l14 14`} />)}
      <path d="M22.500 23V340M102.500 23V340" />
      {XS.map((x) => <path key={x} d={`M${x}.5 340V578M${x - 7} 428l15-15`} />)}
      <path d="M180 420.500H657M180 499.500H657M173 507l15-15M649 507l15-15" />
      {YS.map((y) => <polygon key={y} points={bubble(15, y)} />)}
      {XS.map((x) => <polygon key={x} points={bubble(x + 0.5, 593)} />)}
    </g>
    <rect x="181" y="335" width="476" height="11" fill="#ec7a76" />
    <rect x="181" y="339" width="476" height="3" fill="#e8403a" />
    <g stroke="#b81212" fill="none">
      <path d="M180 23.500H657M180 182.500H657" />
      {XS.map((x) => <path key={x} d={`M${x}.5 23V346`} stroke="#f01212" />)}
    </g>
    <g fill="#e8e8e8" textAnchor="middle">
      {["C", "B", "A"].map((t, i) => <text key={t} x="15" y={YS[i] + 8}>{t}</text>)}
      {["1", "2", "3", "4"].map((t, i) => <text key={t} x={XS[i]} y="601">{t}</text>)}
      {[260, 419, 577].map((x) => <text key={x} x={x} y="467">3000</text>)}
      <text x="419" y="546">9000</text>
      <text transform="translate(70 102) rotate(-90)">3000</text>
      <text transform="translate(70 261) rotate(-90)">3000</text>
    </g>
    <path d="M60 723V699H56L62 686 68 699H64V723z" fill="#00f020" />
    <path d="M66 721H86V716L99 723 86 730V725H66z" fill="#f00a0a" />
    <circle cx="62" cy="723" r="6" fill="#0a0ac8" />
    <g fontSize="18" textAnchor="middle">
      <text x="62" y="685" fill="#00e820">Y</text>
      <text x="108" y="730" fill="#f00a0a">X</text>
    </g>
  </Drawing>
);

export default function App() {
  return (
    <>
      <GlobalStyle />
      <Screen>
        <TitleBar>
          <QuickTools>
            {quick.map(([n, menu]) => (
              <QuickButton key={n} aria-label={n}>
                <Icon n={n} />
                {menu && <Caret w={6} c={n === "redo" ? "#b5b5b5" : "#555"} />}
              </QuickButton>
            ))}
            <QuickButton aria-label="more"><Icon n="more" s={16} /></QuickButton>
          </QuickTools>
          <AppTitle>广联达BIM土建计量平台 GTJ2021 - [C:\Users\Administrator\Desktop\工程1.GTJ]</AppTitle>
          <Minimise aria-label="最小化" />
        </TitleBar>

        <TabRow>
          <Tabs>
            {menuTabs.map((t) => <Tab key={t} $active={t === "建模"}>{t}</Tab>)}
          </Tabs>
          <TabTools>
            <HelpSearch>
              <SearchInput placeholder="答疑解惑，撞这里" aria-label="答疑解惑" />
              <Magnifier c="#a0a0a0" />
            </HelpSearch>
            <RoundButton aria-label="用户">
              <svg width="20" height="20" viewBox="0 0 20 20">
                <circle cx="10" cy="9.500" r="9" fill="#cfcfcf" />
                <path d="M6 9c0-6 8-6 8 0 0 3-1 4-1 5l3 4c-3 2-9 2-12 0l3-4c0-1-1-2-1-5" fill="#fff" />
              </svg>
            </RoundButton>
            <RoundButton aria-label="消息">
              <svg width="20" height="20" viewBox="0 0 20 20">
                <path d="M10 2c11 0 11 12 2 13l-3 4v-4C-1 14-1 2 10 2" fill="#7b7b7b" />
                <path d="M5 8.500h2M9 8.500h2M13 8.500h2" stroke="#fff" strokeWidth="2" />
              </svg>
            </RoundButton>
            <RoundButton aria-label="客服">
              <svg width="20" height="20" viewBox="0 0 20 20" fill="none" stroke="#3f86e8" strokeWidth="2.500">
                <path d="M3 11C1 0 19 0 17 11M16 13c0 3-2 5-5 5" />
                <path d="M3 8v6M17 8v6" strokeWidth="4" />
              </svg>
            </RoundButton>
          </TabTools>
        </TabRow>

        <Ribbon>
          <Group $w={185} $clip>
            <Columns $cols="81px 1fr"><i /><i /><i /><Cmds list={selectCmds} /></Columns>
            <Title>选择</Title>
          </Group>
          <Group $w={242}>
            <Columns $cols="99px 1fr"><Cmds list={cadCmds} /></Columns>
            <Title>CAD操作</Title>
          </Group>
          <Group $w={345}>
            <Columns $cols="82px 138px 1fr"><Cmds list={commonCmds} /></Columns>
            <Title>通用操作</Title>
          </Group>
          <Group $w={297}>
            <Columns $cols="67px 68px 68px 1fr"><Cmds list={modifyCmds} /></Columns>
            <Title>修改</Title>
          </Group>
          <Group $w={149}>
            <DrawBody>
              <BigCmd disabled>
                <svg width="36" height="40" viewBox="0 0 36 40">
                  <path d="M18 2v36M0 20h36" stroke="#b3b3b3" />
                  <circle cx="18" cy="20" r="5" fill="#a9a9a9" />
                </svg>
                点
              </BigCmd>
              <BigCmd>
                <svg width="36" height="40" viewBox="0 0 36 40" fill="#fff" stroke={BLUE}>
                  <path d="M3 36 33 5" stroke="#777" />
                  <path d="M.5 33.500h4v4h-4zM31.500 2.500h4v4h-4z" />
                </svg>
                直线
              </BigCmd>
              <ShapeStack>
                {["arc", "circle", "rect"].map((n) => <Cmd key={n} aria-label={n}><Icon n={n} /></Cmd>)}
              </ShapeStack>
            </DrawBody>
            <Title>绘图</Title>
          </Group>
          <Group $w={255}>
            <Columns $cols="128px 1fr"><Cmds list={identifyCmds} /></Columns>
            <Title plain>识别梁</Title>
          </Group>
          <Group $w={420}>
            <Columns $cols="109px 126px 28px 38px 1fr">
              <Cmds list={editCmds} />
              <ShowOption><BlueCheck type="checkbox" defaultChecked />显示</ShowOption>
              <Command spec={["beamList", "梁跨"]} />
            </Columns>
            <Title>梁二次编辑</Title>
          </Group>
        </Ribbon>

        <ComboBar>
          {["首层", "梁", "梁", "LL-1", "分层1"].map((t, i) => (
            <ComboBox key={i}>
              <Combo $focus={i === 0} aria-label={`选项 ${i + 1}`}><option>{t}</option></Combo>
              <ComboArrow><Caret /></ComboArrow>
            </ComboBox>
          ))}
        </ComboBar>

        <Work>
          <LeftDock>
            <DockBar><CloseButton aria-label="关闭"><XMark /></CloseButton></DockBar>
            <DockStrip $h={27} />
            <DockStrip $h={39}>
              <ViewToggle aria-label="列表">
                <svg width="18" height="20" viewBox="0 0 18 20" fill="none" stroke={BLUE}>
                  <path d="M7 3.500h10M7 9.500h10M7 15.500h10M1.500 2.500h2v2h-2zM1.500 8.500h2v2h-2zM1.500 14.500h2v2h-2z" />
                </svg>
              </ViewToggle>
              <ViewToggle aria-label="图标">
                <svg width="20" height="20" viewBox="0 0 20 20" fill="none" stroke={BLUE}>
                  <path d="M1.500 1.500h17v16h-17z" fill="#fff" />
                  <path d="M1 1h18v6H1z" fill={BLUE} />
                  <path d="M4 4h2M8 4h2M13 4h3" stroke="#fff" strokeWidth="2" />
                  <path d="M4 10.500h11M4 13.500h7" />
                </svg>
              </ViewToggle>
            </DockStrip>
            <TypeList>
              {typeRows.map((t, i) => (
                <TypeItem key={i} $deep={i > 0} $on={t === "梁(L)"}>{t}</TypeItem>
              ))}
            </TypeList>
          </LeftDock>

          <MidDock>
            <Panel $h={255}>
              <DockBar><CloseButton aria-label="关闭"><XMark /></CloseButton></DockBar>
              <PanelTabs>
                <PanelTab $active>构件列表</PanelTab>
                <PanelTab>图纸管理</PanelTab>
              </PanelTabs>
              <PanelTools>
                <ToolButton><Icon n="newDoc" />新建<Caret /></ToolButton>
                <ToolButton><Icon n="copyDoc" s={18} />复制</ToolButton>
                <ToolButton><Icon n="delDoc" s={18} />删除</ToolButton>
                <ToolButton><Icon n="layers" s={19} />层间复制</ToolButton>
                <ToolButton><Icon n="storage" />存档</ToolButton>
                <ToolEnd aria-label="更多">
                  <svg width="10" height="8" viewBox="0 0 10 8" fill="#333"><path d="M0 0l4.500 4L0 8zM5 0l4.500 4L5 8z" /></svg>
                </ToolEnd>
              </PanelTools>
              <PartSearch>
                <PartInput placeholder="搜索构件..." aria-label="搜索构件" />
                <Magnifier c="#4d9ad6" s={16} />
              </PartSearch>
              <Tree>
                <TreeRow $level={0}><Icon n="caretR" s={12} />梁</TreeRow>
                <TreeRow $level={1}><Icon n="caretR" s={12} />非框架梁</TreeRow>
                <TreeRow $level={2}><TreeLeaf>LL-1</TreeLeaf></TreeRow>
              </Tree>
            </Panel>

            <Panel>
              <DockBar><CloseButton aria-label="关闭"><XMark /></CloseButton></DockBar>
              <PanelTabs>
                <PanelTab $active>属性列表</PanelTab>
                <PanelTab>图层管理</PanelTab>
              </PanelTabs>
              <TableArea>
                <PropTable>
                  <colgroup>
                    <col width="27" /><col width="190" /><col width="126" /><col width="52" />
                  </colgroup>
                  <thead>
                    <tr><Th /><Th>属性名称</Th><Th>属性值</Th><Th>附加</Th></tr>
                  </thead>
                  <tbody>
                    {props.map((p, i) => (
                      <tr key={p.name}>
                        <Td $kind="num">{i + 1}</Td>
                        <Td $link={p.link}>{p.name}</Td>
                        <Td>{p.value && <PropValue text={p.value} />}</Td>
                        <Td $kind="box">{p.box && <Check type="checkbox" aria-label={`附加 ${p.name}`} />}</Td>
                      </tr>
                    ))}
                  </tbody>
                </PropTable>
                <ScrollTrack><ScrollThumb /></ScrollTrack>
              </TableArea>
            </Panel>
          </MidDock>

          <Splitter>
            <SplitHandle aria-label="收起">
              <svg width="5" height="10" viewBox="0 0 5 10"><path d="M5 0v10L0 5z" fill="#c8ccce" /></svg>
            </SplitHandle>
          </Splitter>

          <View><Plan /></View>
        </Work>

        <StatusBar>
          <Cell $w={235}>= 2927</Cell>
          <Cell $w={104}>层高：<span>3</span></Cell>
          <Cell $w={166}>标高：<span>5.95~8.95</span></Cell>
          <Cell $w={129}>0</Cell>
          <Cell $w={129}>隐藏：0</Cell>
          <SnapTools>
            <Snap $w={31} aria-label="正交">
              <svg width="18" height="16" viewBox="0 0 18 16" fill="none" stroke="#555"><path d="M2.500 0v14.500H18M2.500 8.500h5v6" /></svg>
            </Snap>
            <Snap $w={45} $on aria-label="捕捉">
              <svg width="20" height="20" viewBox="0 0 20 20"><path d="M3.500 3.500h14v15h-14z" fill="#fff" stroke={BLUE} /><path d="M1 1h6v6H1z" fill="#f0a070" stroke={ORANGE} /></svg>
              <Caret />
            </Snap>
            <Snap $w={31} aria-label="交点">
              <svg width="20" height="18" viewBox="0 0 20 18" stroke="#888"><path d="M0 0l20 18M20 0 0 18" /><circle cx="10" cy="9" r="1.500" /></svg>
            </Snap>
            <Snap $w={45} aria-label="角度">
              <svg width="20" height="16" viewBox="0 0 20 16" fill="none" stroke="#444"><path d="M14 1 1 14.500h18" /><circle cx="9" cy="7" r="2" fill="#444" /></svg>
              <Caret />
            </Snap>
            <Snap $w={45} aria-label="偏移">
              <svg width="20" height="18" viewBox="0 0 20 18" stroke="#444"><path d="M4.500 1v8M.5 5h8" /><path d="M8.500 11.500h11v4h-11z" fill="#333" /></svg>
              <Caret />
            </Snap>
            <Snap $w={91} $on>跨图层选择</Snap>
            <Snap $w={76}>折线选择</Snap>
          </SnapTools>
          <Hint><span>按鼠标左键指定第一个角点，或拾取构件图元</span><span>3</span></Hint>
        </StatusBar>
      </Screen>

      <MiniWindow>
        <MiniHead>
          ..
          <MiniClose aria-label="关闭"><XMark c="#f4f4f4" /></MiniClose>
        </MiniHead>
        <MiniStart>开始</MiniStart>
      </MiniWindow>

      <Recorder>
        <RecHead>
          <svg width="30" height="26" viewBox="0 0 30 26">
            <circle cx="12" cy="13" r="12" fill="#f1f3fa" />
            <path d="m19 13 9-9v18z" fill="#35a9dd" stroke="#e8f4fb" strokeWidth="1.500" />
            <rect x="5" y="6" width="15" height="15" rx="4" fill="#1d87cc" />
            <path d="M5 10c0-3 1-4 4-4h7c3 0 4 1 4 4-5 4-10 4-15 3z" fill="#5cc8ee" />
          </svg>
          <span>录制中... 00:02:39</span>
          <RecClose aria-label="关闭">
            <svg width="16" height="16" viewBox="0 0 16 16" stroke="#fff" strokeWidth="2"><path d="m1 1 14 14M15 1 1 15" /></svg>
          </RecClose>
        </RecHead>
        <RecBody>
          <RecGroup $w={93}>
            <RecButton $w={26} aria-label="暂停">
              <svg width="18" height="26" viewBox="0 0 18 26" fill="#2b78c4"><rect width="7" height="26" rx="3" /><rect x="11" width="7" height="26" rx="3" /></svg>
            </RecButton>
            <RecButton $w={78} aria-label="停止">
              <svg width="25" height="26" viewBox="0 0 25 26"><rect width="25" height="26" rx="5" fill="#d4603a" /></svg>
            </RecButton>
          </RecGroup>
          <RecGroup $w={132}>
            <RecButton $w={76} aria-label="音量">
              <svg width="36" height="30" viewBox="0 0 36 30" stroke="#c4502c" strokeWidth="3"><path d="M0 27.500h36" strokeDasharray="5 1" /></svg>
            </RecButton>
            <RecButton $w={46} aria-label="工具">
              <svg width="38" height="40" viewBox="0 0 38 40">
                <path d="m27 11-15 28H9V20z" fill="#a7cdea" />
                <path d="M0 1h17l7 9-7 10H0z" fill="#3390cd" />
                <circle cx="9" cy="10" r="4" fill="#fff" />
                <path d="M5 20h2v20H5z" fill="#4a86b4" />
                <path d="M11 25.500h26" stroke="#8a98a6" />
                <path d="M28 10.500h9M14 39.500h20" stroke="#d5dade" />
              </svg>
            </RecButton>
          </RecGroup>
          <RecButton $w={50} aria-label="摄像头">
            <svg width="30" height="32" viewBox="0 0 30 32">
              <circle cx="11" cy="12" r="9" fill="none" stroke="#3390cd" strokeWidth="3.500" />
              <circle cx="11" cy="12" r="4" fill="none" stroke="#3390cd" strokeWidth="3" />
              <path d="M8 22h6v5h4v3H4v-3h4z" fill="#3390cd" />
              <circle cx="21.500" cy="22.500" r="8" fill="#82c552" />
              <path d="M21.500 18v9M17 22.500h9" stroke="#fff" strokeWidth="1.500" />
            </svg>
          </RecButton>
          <RecButton $w={20} aria-label="摄像头选项"><Caret w={5} c="#222" /></RecButton>
          <RecButton $w={54} aria-label="画笔">
            <svg width="30" height="30" viewBox="0 0 30 30" fill="#3390cd">
              <path d="m22 0 8 7-4 5-8-8zM16 6l8 8L8 28l-8 2 1-9z" />
            </svg>
          </RecButton>
        </RecBody>
      </Recorder>
    </>
  );
}
